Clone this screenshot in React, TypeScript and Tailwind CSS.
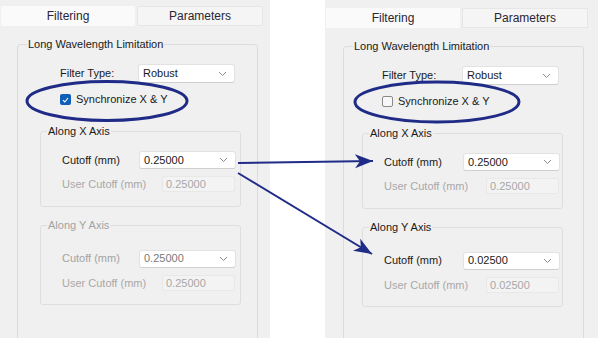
import React from "react";

const navy = "#1f2b86";

function Chevron() {
  return (
    <svg width="9" height="6" viewBox="0 0 9 6" className="shrink-0">
      <path d="M1 1 L4.5 4.5 L8 1" fill="none" stroke="#8c8c8c" strokeWidth="1" />
    </svg>
  );
}

function Combo({ value, dim, h = "h-[19px]" }: { value: string; dim?: boolean; h?: string }) {
  return (
    <div
      className={`flex w-[97px] ${h} items-center justify-between rounded-[3px] border border-[#e2e2e2] border-b-[#cfcfcf] bg-white pl-[4px] pr-[7px] ${
        dim ? "text-[#7a7a7a]" : "text-[#1a1a1a]"
      }`}
    >
      <span>{value}</span>
      <Chevron />
    </div>
  );
}

function ReadOnlyBox({ value }: { value: string }) {
  return (
    <div className="flex h-[16px] w-[73px] items-center rounded-[2px] border border-[#e8e8e8] bg-[#f3f3f3] pl-[3px] text-[#a8a8a8]">
      {value}
    </div>
  );
}

function CheckBox({ checked }: { checked: boolean }) {
  if (checked) {
    return (
      <span className="flex h-[11px] w-[11px] items-center justify-center rounded-[2px] bg-[#0f5fb8]">
        <svg width="7" height="6" viewBox="0 0 7 6">
          <path d="M1 3.2 L2.8 5 L6 1" fill="none" stroke="white" strokeWidth="1.1" />
        </svg>
      </span>
    );
  }
  return <span className="h-[11px] w-[11px] rounded-[2px] border border-[#8a8a8a] bg-[#f7f7f7]" />;
}

type Metrics = {
  rowPad: string;
  groupMl: string;
  labelW: string;
  cutoffW: string;
  userW: string;
};

function AxisGroup({
  title,
  enabled,
  value,
  top,
  comboGap,
  m,
}: {
  title: string;
  enabled: boolean;
  value: string;
  top: string;
  comboGap: string;
  m: Metrics;
}) {
  return (
    <fieldset className={`${top} ${m.groupMl} w-[201px] rounded-[3px] border border-[#dedede] pb-[13px]`}>
      <legend className={`ml-[6px] px-[1px] leading-[13px] ${enabled ? "text-[#1a1a1a]" : "text-[#a3a3a3]"}`}>
        {title}
      </legend>
      <div className={`${comboGap} flex items-center pl-[21px]`}>
        <span className={`${m.cutoffW} ${enabled ? "text-[#1a1a1a]" : "text-[#a3a3a3]"}`}>Cutoff (mm)</span>
        <Combo value={value} dim={!enabled} h="h-[18px]" />
      </div>
      <div className="mt-[7px] flex items-center pl-[21px]">
        <span className={`${m.userW} text-[#a8a8a8]`}>User Cutoff (mm)</span>
        <ReadOnlyBox value={value} />
      </div>
    </fieldset>
  );
}

function Panel({
  sync,
  yValue,
  width,
  shift,
  outerMl,
  m,
}: {
  sync: boolean;
  yValue: string;
  width: string;
  shift: string;
  outerMl: string;
  m: Metrics;
}) {
  return (
    <div className={`${width} flex h-full shrink-0 flex-col bg-[#f0f0f0] ${shift}`}>
      <div className="mt-[6px] flex h-[21px] gap-[2px] pl-[1px]">
        <div className="flex w-[134px] items-center justify-center bg-[#fafafa] text-[12px] font-medium text-[#2a2533]">
          Filtering
        </div>
        <div className="flex w-[126px] items-center justify-center border border-[#e6e6e6] bg-[#f5f5f5] text-[12px] font-medium text-[#2a2533]">
          Parameters
        </div>
      </div>
      <div className={`${outerMl} pt-[12px]`}>
        <fieldset className="h-[320px] w-[241px] rounded-[3px] border border-[#dcdcdc]">
          <legend className="ml-[9px] px-[1px] leading-[13px]">Long Wavelength Limitation</legend>
          <div className={`mt-[13px] flex items-center ${m.rowPad}`}>
            <span className={m.labelW}>Filter Type:</span>
            <Combo value="Robust" />
          </div>
          <div className={`mt-[9px] flex h-[15px] items-center gap-[5px] ${m.rowPad}`}>
            <CheckBox checked={sync} />
            <span>Synchronize X &amp; Y</span>
          </div>
          <AxisGroup title="Along X Axis" enabled value="0.25000" top="mt-[18px]" comboGap="mt-[13px]" m={m} />
          <AxisGroup title="Along Y Axis" enabled={!sync} value={yValue} top="mt-[12px]" comboGap="mt-[18px]" m={m} />
        </fieldset>
      </div>
    </div>
  );
}

function Annotations() {
  return (
    <svg className="pointer-events-none absolute inset-0" width="600" height="338" viewBox="0 0 600 338">
      <defs>
        <marker
          id="head"
          markerUnits="userSpaceOnUse"
          markerWidth="20"
          markerHeight="16"
          refX="18"
          refY="7"
          orient="auto"
        >
          <path d="M0 0 L18 7 L0 14 L5 7 Z" fill={navy} />
        </marker>
      </defs>
      <ellipse cx="107" cy="101" rx="80" ry="19.5" fill="none" stroke={navy} strokeWidth="3" />
      <ellipse cx="437" cy="102" rx="82" ry="20" fill="none" stroke={navy} strokeWidth="3" />
      <line x1="238" y1="163" x2="373" y2="161" stroke={navy} strokeWidth="2" markerEnd="url(#head)" />
      <line x1="238" y1="173" x2="372" y2="254" stroke={navy} strokeWidth="2" markerEnd="url(#head)" />
    </svg>
  );
}

const leftM: Metrics = {
  rowPad: "pl-[42px]",
  groupMl: "ml-[22px]",
  labelW: "w-[78px]",
  cutoffW: "w-[77px]",
  userW: "w-[100px]",
};

const rightM: Metrics = {
  rowPad: "pl-[38px]",
  groupMl: "ml-[18px]",
  labelW: "w-[80px]",
  cutoffW: "w-[79px]",
  userW: "w-[102px]",
};

export default function App() {
  return (
    <div className="relative flex h-[338px] w-[600px] overflow-hidden bg-white font-['Liberation_Sans',Arial,sans-serif] text-[11px] text-[#1a1a1a]">
      <Panel sync yValue="0.25000" width="w-[270px]" shift="" outerMl="pl-[17px]" m={leftM} />
      <div className="w-[55px] shrink-0" />
      <Panel sync={false} yValue="0.02500" width="w-[273px]" shift="pt-[2px]" outerMl="pl-[18px]" m={rightM} />
      <Annotations />
    </div>
  );
}
